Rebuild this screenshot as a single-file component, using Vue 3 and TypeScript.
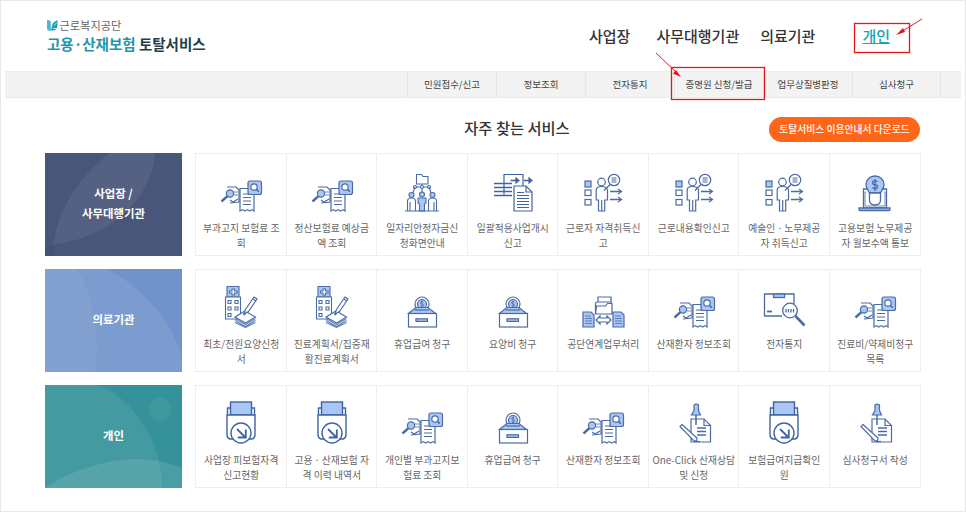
<script setup lang="ts">
interface Service { label: string; icon: string }
interface Section { name: string; tone: string; items: Service[] }

const topLinks = ['사업장', '사무대행기관', '의료기관', '개인']
const subLinks = ['민원접수/신고', '정보조회', '전자통지', '증명원 신청/발급', '업무상질병판정', '심사청구']

const sections: Section[] = [
  {
    name: '사업장 /\n사무대행기관',
    tone: 'navy',
    items: [
      { label: '부과고지 보험료 조\n회', icon: 'search' },
      { label: '정산보험료 예상금\n액 조회', icon: 'search' },
      { label: '일자리안정자금신\n청화면안내', icon: 'org' },
      { label: '일괄적용사업개시\n신고', icon: 'transfer' },
      { label: '근로자 자격취득신\n고', icon: 'person' },
      { label: '근로내용확인신고', icon: 'person' },
      { label: '예술인ㆍ노무제공\n자 취득신고', icon: 'person' },
      { label: '고용보험 노무제공\n자 월보수액 통보', icon: 'bulb' },
    ],
  },
  {
    name: '의료기관',
    tone: 'blue',
    items: [
      { label: '최초/전원요양신청\n서', icon: 'hospital' },
      { label: '진료계획서/집중재\n활진료계획서', icon: 'hospital' },
      { label: '휴업급여 청구', icon: 'coin' },
      { label: '요양비 청구', icon: 'coin' },
      { label: '공단연계업무처리', icon: 'folders' },
      { label: '산재환자 정보조회', icon: 'search' },
      { label: '전자통지', icon: 'box' },
      { label: '진료비/약제비청구\n목록', icon: 'search' },
    ],
  },
  {
    name: '개인',
    tone: 'teal',
    items: [
      { label: '사업장 피보험자격\n신고현황', icon: 'tray' },
      { label: '고용ㆍ산재보험 자\n격 이력 내역서', icon: 'tray' },
      { label: '개인별 부과고지보\n험료 조회', icon: 'search' },
      { label: '휴업급여 청구', icon: 'coin' },
      { label: '산재환자 정보조회', icon: 'search' },
      { label: 'One-Click 산재상담\n및 신청', icon: 'pin' },
      { label: '보험급여지급확인\n원', icon: 'tray' },
      { label: '심사청구서 작성', icon: 'pin' },
    ],
  },
]
</script>

<template>
  <div class="page">
    <svg class="defs" aria-hidden="true">
      <symbol id="i-search" viewBox="0 0 48 48">
        <g fill="none" stroke="#4a6ba5" stroke-width="1.2">
          <path d="M10 23h9l3 3v12l-9 1" fill="#fff" />
          <path d="M17 28h4M17 31h4" stroke-width=".8" />
          <path d="M23 24.500h14V47l-2-1.400-2.400 1.400-2.400-1.400-2.400 1.400-2.400-1.400L23 47z" fill="#fff" />
          <path d="M26 30h8M26 33.500h8M26 37h8M26 40.500h8" />
          <rect x="31" y="17" width="13.500" height="13.500" rx="2" fill="#a9c6f5" />
          <circle cx="37" cy="23" r="3.200" fill="#fff" />
          <path d="M39.400 25.400l2.400 2.200" stroke-width="1.500" />
          <circle cx="13" cy="29.500" r="3.600" fill="#a9c6f5" />
          <path d="M10.400 32.200L4.500 37.500" stroke-width="2.400" />
          <path d="M13 36l3 2 5-3" />
        </g>
      </symbol>
      <symbol id="i-org" viewBox="0 0 48 48">
        <g fill="none" stroke="#4a6ba5" stroke-width="1.100">
          <path d="M18.500 10.500h5l1.500 2h5v7.500h-11.500z" fill="#fff" />
          <path d="M24 20v8M17 23h14" />
          <circle cx="17" cy="23" r="1.500" fill="#fff" />
          <circle cx="24" cy="23" r="1.500" fill="#fff" />
          <circle cx="31" cy="23" r="1.500" fill="#fff" />
          <path d="M17 23l-2 6M31 23l2 6" />
          <circle cx="13.500" cy="31" r="2.500" fill="#a9c6f5" />
          <circle cx="34.500" cy="31" r="2.500" fill="#a9c6f5" />
          <circle cx="24" cy="30.500" r="2.500" fill="#a9c6f5" />
          <path d="M9.500 47V37q0-3 4-3t4 3v10M30.500 47V37q0-3 4-3t4 3v10" />
          <path d="M12 38v9M36 38v9" />
          <path d="M20 34h8v5l-1.500 1v7h-5v-7L20 39z" fill="#a9c6f5" />
          <path d="M7 47h34" />
        </g>
      </symbol>
      <symbol id="i-transfer" viewBox="0 0 48 48">
        <g fill="none" stroke="#3f64a3" stroke-width="1.200">
          <path d="M15 31V10.500h19V22" />
          <path d="M25 22h12l6 6v19H25z" fill="#fff" />
          <path d="M37 22v6h6" />
          <path d="M28 28.500h7M28 31.500h12M28 34.500h12M28 37.500h12M28 40.500h12M28 43.500h12" />
          <path d="M5 19.500h18M5 23.500h18M5 27.500h18M5 31.500h18" stroke-width="1.400" />
          <path d="M21.500 16.500H29M35 16.500h7" stroke-width="1.400" />
          <path d="M27 14l3 2.500-3 2.500zM40 14l3 2.500-3 2.500z" fill="#3f64a3" />
        </g>
      </symbol>
      <symbol id="i-person" viewBox="0 0 48 48">
        <g fill="none" stroke="#4a6ba5" stroke-width="1.200">
          <rect x="6" y="17" width="6" height="6" fill="#a9c6f5" />
          <rect x="6" y="26" width="6" height="5.500" />
          <rect x="6" y="35.500" width="6" height="5.500" />
          <circle cx="22.500" cy="18" r="3.800" />
          <path d="M19.500 47V36h-2.300V26q0-3.500 5.300-3.500t6 3.500v10h-2.800v11zM22.700 36v11" fill="#fff" />
          <circle cx="35" cy="16" r="5.700" fill="#fff" />
          <path d="M32.500 14h5M32.500 16h5M32.500 18h5" />
          <path d="M31 20.500l-6 6" />
          <path d="M31 27.500h11M31 35.500h11" stroke-width="1.400" />
          <path d="M39 25l3.500 2.500L39 30M39 33l3.500 2.500L39 38" />
        </g>
      </symbol>
      <symbol id="i-bulb" viewBox="0 0 48 48">
        <g fill="none" stroke="#4a6ba5" stroke-width="1.300">
          <path d="M16 25h-3.500v19h23V25H32" />
          <path d="M15 28h-1v14h20V28h-1" stroke-width=".8" />
          <path d="M8 44h31v1.500q0 1-1 1H9q-1 0-1-1z" fill="#a9c6f5" />
          <path d="M24 12c5.300 0 9 3.700 9 8.800 0 3.600-2.500 5.700-3.500 8.200h-11c-1-2.500-3.500-4.600-3.500-8.200C15 15.700 18.700 12 24 12z" fill="#a9c6f5" />
          <path d="M18.500 29v7q0 5 5.500 5t5.500-5v-7z" fill="#fff" />
          <path d="M26.500 18q-1-1.300-2.500-1.300-2.500 0-2.500 2t2.500 2 2.500 2-2.500 2q-1.500 0-2.500-1.300M24 15v12" />
        </g>
      </symbol>
      <symbol id="i-hospital" viewBox="0 0 48 48">
        <g fill="none" stroke="#4a6ba5" stroke-width="1.100">
          <path d="M10 6.500h12V17H10z" fill="#a9c6f5" />
          <path d="M15 9h2.500v2H20v2h-2.500v2H15v-2h-2.500v-2H15z" fill="#fff" />
          <path d="M8.500 17h15v22h-15z" fill="#fff" />
          <path d="M11 20.500h3v3h-3zM18 20.500h3v3h-3zM11 27h3v3h-3zM18 27h3v3h-3zM11 33.500h3v3h-3z" />
          <path d="M18 37l10-6 10.500 6-10 6z" fill="#fff" />
          <path d="M18 38.500l10.500 6 10-6M18 40.500l10.500 6 10-6M18 42.500l10.500 5 10-5" stroke="#5f82bd" />
          <path d="M27 34l1.500-4.500L37 17l3 2-8.500 12.500z" fill="#fff" />
          <path d="M36 19l3 2" />
          <path d="M28 33l-1 2" stroke-width="2" />
        </g>
      </symbol>
      <symbol id="i-coin" viewBox="0 0 48 48">
        <g fill="none" stroke="#4a6ba5" stroke-width="1.200">
          <circle cx="24" cy="24" r="7" fill="#fff" />
          <circle cx="24" cy="24" r="4.500" fill="#a9c6f5" />
          <path d="M25.500 22.300q-.6-.8-1.500-.8-1.500 0-1.500 1.200t1.500 1.300 1.500 1.300-1.500 1.200q-.9 0-1.500-.8M24 20.500v7" stroke-width=".8" />
          <path d="M18 27.500L10.500 33.500h27L30 27.500z" fill="#a9c6f5" />
          <path d="M17 30h14" />
          <rect x="10.500" y="33.500" width="28" height="13.500" fill="#fff" />
          <rect x="18" y="38.800" width="11.500" height="2.600" fill="#a9c6f5" />
        </g>
      </symbol>
      <symbol id="i-folders" viewBox="0 0 48 48">
        <g fill="none" stroke="#4a6ba5" stroke-width="1.200">
          <path d="M19 22v-5h13v5" fill="#fff" />
          <path d="M16.500 34V24q0-2 2-2h13q1.500 0 1.500 2v10z" fill="#fff" />
          <path d="M16.500 34l1-8h9l2-2.500h4.500" />
          <path d="M4 32h8l3 3v12H4z" fill="#a9c6f5" />
          <path d="M34 32h8l3 3v12H34z" fill="#a9c6f5" />
          <path d="M6 36h6M6 38.500h7M6 41h7M6 43.500h7M36 36h6M36 38.500h7M36 41h7M36 43.500h7" stroke-width=".8" />
          <path d="M21 36l-4 4 4 4v-2h7v2l4-4-4-4v2h-7z" fill="#fff" />
        </g>
      </symbol>
      <symbol id="i-box" viewBox="0 0 48 48">
        <g fill="none" stroke="#4a6ba5" stroke-width="1.300">
          <path d="M22 36H4.500V14H34v10" />
          <rect x="13.500" y="14" width="11" height="3.500" fill="#a9c6f5" />
          <path d="M7 31.500h5" stroke-width="1.800" />
          <circle cx="30" cy="30.500" r="7.300" fill="#fff" />
          <path d="M26 29v3.500M28.500 29v3.500M31 29v3.500M33.500 29v3.500" />
          <path d="M35.500 36l9 9.500" stroke-width="2.600" />
        </g>
      </symbol>
      <symbol id="i-tray" viewBox="0 0 48 48">
        <g fill="none" stroke="#3f64a3" stroke-width="1.400">
          <path d="M13 12H10.500v8M35 12h2.500v8" />
          <rect x="13.500" y="6" width="21" height="13" fill="#a9c6f5" />
          <path d="M10 19h28v20q0 3-3 4H13q-3-1-3-4z" fill="#fff" />
          <circle cx="24" cy="37" r="10" fill="#fff" />
          <path d="M20 33l8.500 8.500M28.800 33.500v8h-8" stroke-width="1.800" />
        </g>
      </symbol>
      <symbol id="i-pin" viewBox="0 0 48 48">
        <g fill="none" stroke="#4a6ba5" stroke-width="1.200">
          <path d="M21 23h13l6.500 6.500V46H21z" fill="#fff" />
          <path d="M34 23v6.500h6.500" />
          <path d="M27 32h9M27 35.500h9M27 39h9" stroke-width="1.300" />
          <path d="M26 19v10" stroke-width="1.500" />
          <path d="M24 9q2.300-1.700 4.500 0v5.500l2 4.500h-9l2.500-4.500z" fill="#a9c6f5" />
          <path d="M12 28.500l15 13.500-.5 3-3-.5L10 30.500z" fill="#fff" />
          <path d="M24 45.500h6" />
        </g>
      </symbol>
    </svg>

    <header class="header">
      <div class="logo">
        <div class="logo-org">
          <svg class="logo-mark" viewBox="0 0 11 11" aria-hidden="true">
            <path d="M0 0h2.500q1.500 0 1.500 2v6.500q0 1.500 1 2.500H2Q0 11 0 8.500z" fill="#4db8d4" />
            <path d="M11 0v4.500Q11 10.500 5.500 11q-1-.5-1-2l1-4Q7 1 11 0z" fill="#1c97ad" />
            <path d="M6 8.500h4M7 6q1.200-1 3-3.500" stroke="#fff" stroke-width=".8" fill="none" />
          </svg>
          <span>근로복지공단</span>
        </div>
        <div class="logo-title"><em>고용·산재보험</em> 토탈서비스</div>
      </div>
      <nav class="top-nav">
        <a v-for="link in topLinks" :key="link" class="top-link">{{ link }}</a>
      </nav>
    </header>

    <nav class="sub-nav">
      <a v-for="link in subLinks" :key="link" class="sub-link">{{ link }}</a>
    </nav>

    <div class="title-row">
      <h2 class="title">자주 찾는 서비스</h2>
      <a class="guide-btn">토탈서비스 이용안내서 다운로드</a>
    </div>

    <main class="sections">
      <section v-for="section in sections" :key="section.tone" class="section">
        <div class="tile" :class="section.tone">
          <svg class="tile-art" viewBox="0 0 137 103" preserveAspectRatio="none" aria-hidden="true">
            <template v-if="section.tone === 'navy'">
              <path d="M9 92C12 50 45 15 65 0H110C108 40 70 88 0 92Z" fill="#fff" opacity=".07" />
              <path d="M0 92C3 92 6 92 9 92L8 103H0Z" fill="#000" opacity=".04" />
            </template>
            <template v-else-if="section.tone === 'blue'">
              <path d="M0 0H62C100 20 128 55 137 89V103H0Z" fill="#fff" opacity=".09" />
              <path d="M0 0H32C50 30 55 70 50 103H0Z" fill="#fff" opacity=".05" />
            </template>
            <template v-else>
              <path d="M0 0H54C90 15 118 60 117 103H0Z" fill="#fff" opacity=".08" />
              <path d="M0 103C30 82 70 74 90 74C110 74 125 78 137 83V103Z" fill="#fff" opacity=".1" />
              <circle cx="115" cy="24" r="11" fill="#fff" opacity=".06" />
            </template>
          </svg>
          <span class="tile-name">{{ section.name }}</span>
        </div>
        <ul class="grid">
          <li v-for="item in section.items" :key="item.label" class="cell">
            <svg class="icon" aria-hidden="true"><use :href="`#i-${item.icon}`" /></svg>
            <span class="label">{{ item.label }}</span>
          </li>
        </ul>
      </section>
    </main>

    <svg class="notes" viewBox="0 0 966 513" aria-hidden="true">
      <rect x="854.500" y="23.500" width="55" height="29" fill="none" stroke="#e8141c" stroke-width="1.300" />
      <rect x="671.500" y="67.500" width="93" height="32" fill="none" stroke="#e8141c" stroke-width="1.300" />
      <path d="M922 19L901 32" stroke="#e8141c" stroke-width="1" />
      <path d="M896 35l7-7 2 4z" fill="#e8141c" />
      <path d="M656 53L676 72" stroke="#e8141c" stroke-width="1" />
      <path d="M681 77l-8-3.500 3-3.500z" fill="#e8141c" />
    </svg>
  </div>
</template>

<style scoped>
.page {
  position: relative;
  box-sizing: border-box;
  width: 966px;
  height: 512px;
  overflow: hidden;
  border: 1px solid #e8e8e8;
  background: #fff;
  font-family: "Noto Sans CJK KR", "Noto Sans", sans-serif;
  color: #444;
}
.defs {
  display: none;
}
.header {
  display: flex;
  align-items: flex-start;
  justify-content: space-between;
  height: 70px;
  padding: 17px 75px 0 46px;
  box-sizing: border-box;
}
.logo-org {
  display: flex;
  align-items: center;
  gap: 2px;
  height: 14px;
  font-size: 11.200px;
  line-height: 14px;
  color: #666;
}
.logo-mark {
  width: 10.500px;
  height: 11px;
}
.logo-title {
  margin-top: 2px;
  font-size: 14.500px;
  line-height: 20px;
  font-weight: 700;
  color: #1c3e4d;
  white-space: nowrap;
}
.logo-title em {
  font-style: normal;
  color: #1f96ad;
}
.top-nav {
  display: flex;
  gap: 20px;
  padding-top: 7px;
}
.top-link {
  font-size: 15px;
  line-height: 22px;
  font-weight: 500;
  color: #333;
}
.top-link:nth-child(1) {
  margin-right: 6px;
}
.top-link:nth-child(2) {
  margin-right: 1px;
}
.top-link:nth-child(3) {
  margin-right: 27px;
}
.top-link:nth-child(4) {
  color: #16a5b8;
  text-decoration: underline;
}
.sub-nav {
  display: flex;
  box-sizing: border-box;
  height: 27px;
  margin: 0 4px;
  padding: 0 19px 0 402px;
  background: #f3f3f3;
  border-top: 1px solid #eee;
  border-bottom: 1px solid #e9e9e9;
}
.sub-link {
  flex: 0 0 89px;
  box-sizing: border-box;
  border-left: 1px solid #e6e6e6;
  text-align: center;
  font-size: 9.500px;
  line-height: 24px;
  color: #444;
  white-space: nowrap;
}
.sub-link:last-child {
  border-right: 1px solid #e6e6e6;
}
.title-row {
  position: relative;
  display: flex;
  justify-content: center;
  align-items: flex-start;
  height: 25px;
  margin-top: 19px;
  padding-left: 68px;
}
.title {
  margin: 0;
  font-size: 15.300px;
  line-height: 21px;
  font-weight: 500;
  color: #333;
}
.guide-btn {
  position: absolute;
  left: 768px;
  top: 0;
  width: 151px;
  height: 25px;
  border-radius: 13px;
  background: #ff661a;
  color: #fff;
  font-size: 9.800px;
  line-height: 25px;
  font-weight: 500;
  text-align: center;
  white-space: nowrap;
}
.sections {
  display: flex;
  flex-direction: column;
  gap: 13.200px;
  margin-top: 11px;
  padding-left: 44px;
}
.section {
  display: flex;
  gap: 13px;
  height: 103px;
}
.tile {
  position: relative;
  flex: 0 0 137px;
  display: flex;
  align-items: center;
  justify-content: center;
  overflow: hidden;
}
.tile.navy {
  background: #49567a;
}
.tile.blue {
  background: #7093cb;
}
.tile.teal {
  background: #35929a;
}
.tile-art {
  position: absolute;
  inset: 0;
  width: 100%;
  height: 100%;
}
.tile-name {
  position: relative;
  padding-bottom: 4px;
  color: #fff;
  font-size: 11.400px;
  line-height: 20px;
  font-weight: 700;
  text-align: center;
  white-space: pre-line;
}
.grid {
  display: grid;
  grid-template-columns: repeat(8, 1fr);
  flex: 0 0 726px;
  margin: 0;
  padding: 0;
  list-style: none;
  border: 1px solid #eee;
  box-sizing: border-box;
}
.cell {
  display: flex;
  flex-direction: column;
  align-items: center;
  padding: 10px 0 0 1px;
  border-right: 1px solid #eee;
}
.cell:last-child {
  border-right: 0;
}
.icon {
  flex: none;
  width: 48px;
  height: 48px;
}
.label {
  margin-top: 9px;
  font-size: 9.800px;
  line-height: 14.500px;
  color: #666;
  text-align: center;
  white-space: pre-line;
}
.notes {
  position: absolute;
  left: -1px;
  top: -1px;
  width: 966px;
  height: 513px;
  pointer-events: none;
}
</style>
